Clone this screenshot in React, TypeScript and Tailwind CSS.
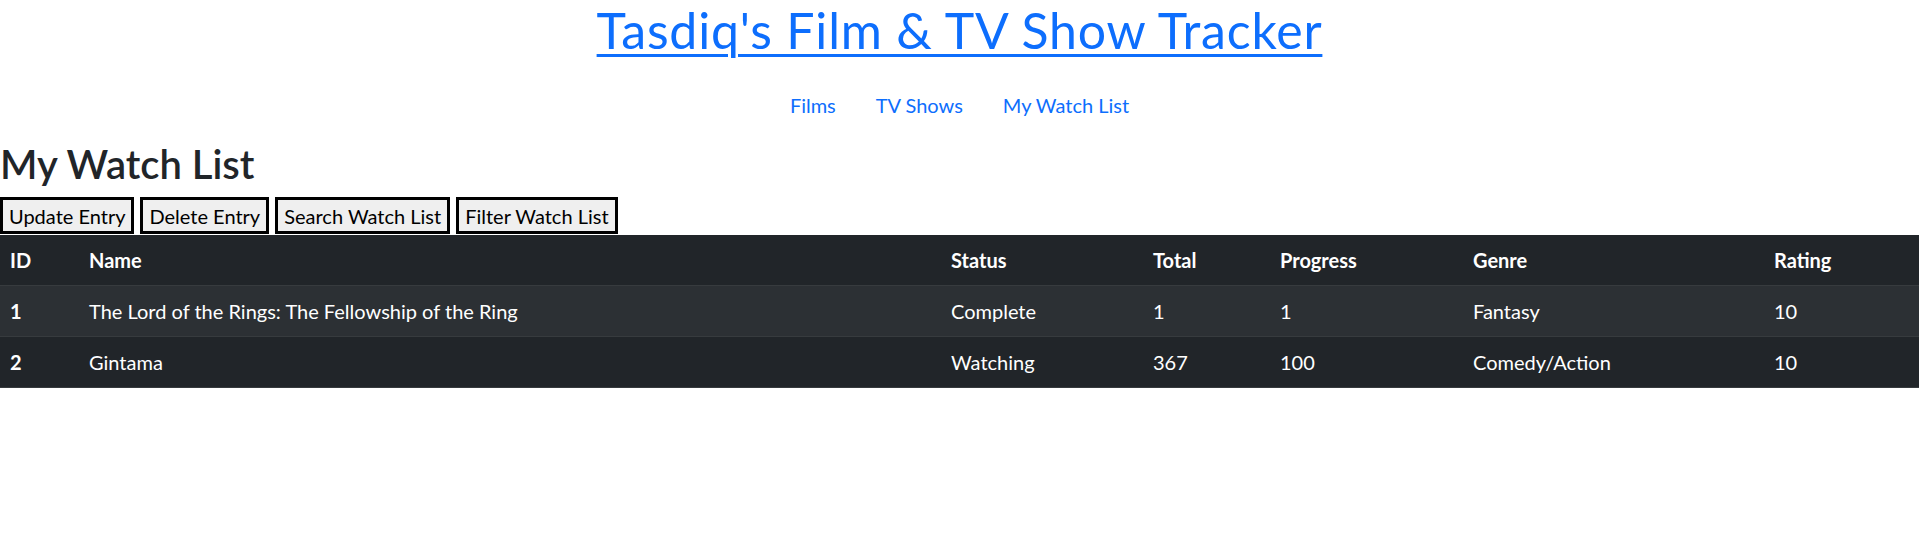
import React from 'react';

interface Entry {
  id: number;
  name: string;
  status: string;
  total: number;
  progress: number;
  genre: string;
  rating: number;
}

const entries: Entry[] = [
  { id: 1, name: 'The Lord of the Rings: The Fellowship of the Ring', status: 'Complete', total: 1, progress: 1, genre: 'Fantasy', rating: 10 },
  { id: 2, name: 'Gintama', status: 'Watching', total: 367, progress: 100, genre: 'Comedy/Action', rating: 10 },
];

const columns = [
  { label: 'ID', width: 'w-[79px]' },
  { label: 'Name', width: 'w-[862px]' },
  { label: 'Status', width: 'w-[202px]' },
  { label: 'Total', width: 'w-[127px]' },
  { label: 'Progress', width: 'w-[193px]' },
  { label: 'Genre', width: 'w-[301px]' },
  { label: 'Rating', width: 'w-auto' },
];

const navLinks = ['Films', 'TV Shows', 'My Watch List'];
const actions = ['Update Entry', 'Delete Entry', 'Search Watch List', 'Filter Watch List'];

const App: React.FC = () => {
  return (
    <div className="min-h-screen bg-white font-['Lato','Segoe_UI',sans-serif] text-[#212529]">
      <header>
        <h1 className="text-center text-[50px] leading-[60px] font-normal tracking-[0.8px]">
          <a href="#" className="text-[#0d6efd] underline decoration-[3px] underline-offset-[5px]">
            Tasdiq's Film &amp; TV Show Tracker
          </a>
        </h1>
        <nav className="mt-[20px] flex justify-center">
          {navLinks.map((link) => (
            <a key={link} href="#" className="px-5 py-[10px] text-[20px] leading-[30px] text-[#0d6efd]">
              {link}
            </a>
          ))}
        </nav>
      </header>

      <main className="mt-[10px]">
        <h2 className="text-[40px] leading-[48px] font-semibold">My Watch List</h2>
        <div className="mt-[8px] flex h-[39px] items-start gap-[6px] pt-px">
          {actions.map((action) => (
            <button
              key={action}
              className="h-[37px] border-[3px] border-black bg-[#efefef] px-[6px] text-[20px] leading-none text-black"
            >
              {action}
            </button>
          ))}
        </div>

        <table className="w-full table-fixed border-collapse bg-[#212529] text-[20px] leading-[30px] text-white">
          <colgroup>
            {columns.map((col) => (
              <col key={col.label} className={col.width} />
            ))}
          </colgroup>
          <thead>
            <tr className="border-b border-[#373b3e]">
              {columns.map((col) => (
                <th key={col.label} className="p-[10px] text-left font-bold">
                  {col.label}
                </th>
              ))}
            </tr>
          </thead>
          <tbody>
            {entries.map((entry, index) => (
              <tr key={entry.id} className={`border-b border-[#373b3e] ${index % 2 === 0 ? 'bg-[#2c3034]' : ''}`}>
                <th className="p-[10px] text-left font-bold">{entry.id}</th>
                <td className="p-[10px]">{entry.name}</td>
                <td className="p-[10px]">{entry.status}</td>
                <td className="p-[10px]">{entry.total}</td>
                <td className="p-[10px]">{entry.progress}</td>
                <td className="p-[10px]">{entry.genre}</td>
                <td className="p-[10px]">{entry.rating}</td>
              </tr>
            ))}
          </tbody>
        </table>
      </main>
    </div>
  );
};

export default App;
